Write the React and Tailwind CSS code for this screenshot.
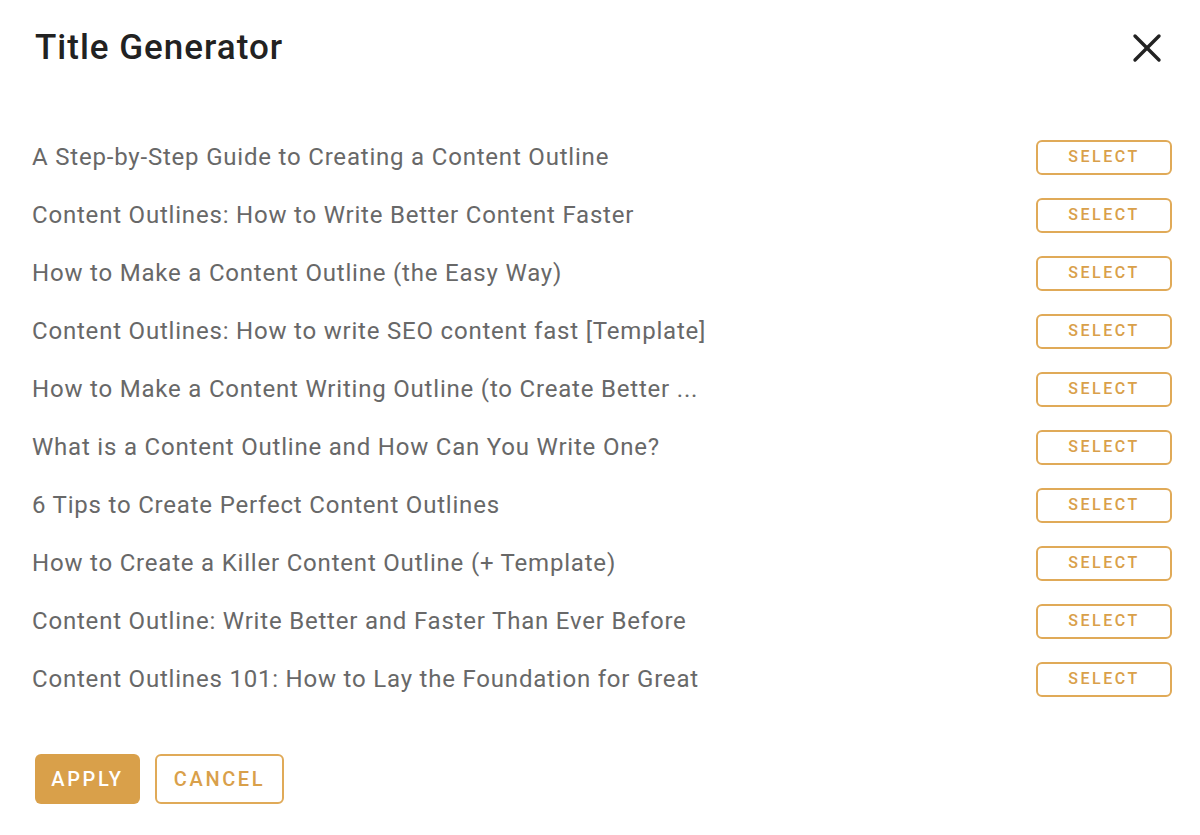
import { X } from 'lucide-react';

const titles = [
    'A Step-by-Step Guide to Creating a Content Outline',
    'Content Outlines: How to Write Better Content Faster',
    'How to Make a Content Outline (the Easy Way)',
    'Content Outlines: How to write SEO content fast [Template]',
    'How to Make a Content Writing Outline (to Create Better ...',
    'What is a Content Outline and How Can You Write One?',
    '6 Tips to Create Perfect Content Outlines',
    'How to Create a Killer Content Outline (+ Template)',
    'Content Outline: Write Better and Faster Than Ever Before',
    'Content Outlines 101: How to Lay the Foundation for Great',
];

export default function App() {
    return (
        <div className="w-[1200px] h-[835px] bg-white font-['Roboto',sans-serif] overflow-hidden">
            <div className="flex items-center justify-between pl-[35px] pr-[29px] pt-[24px]">
                <h1 className="text-[35px] font-medium text-[#222222] leading-[48px] tracking-[1px]">Title Generator</h1>
                <X className="w-[48px] h-[48px] text-[#222222]" strokeWidth={1.7} />
            </div>

            <div className="flex flex-col pl-[32px] pr-[28px] mt-[56px]">
                {titles.map((t) => (
                    <div key={t} className="flex items-center justify-between h-[58px]">
                        <span className="text-[24px] text-[#686868] tracking-[0.8px]">{t}</span>
                        <button className="w-[136px] h-[35px] border-2 border-[#e0aa58] rounded-[6px] text-[#d9a04a] text-[16px] font-medium tracking-[2.5px]">
                            SELECT
                        </button>
                    </div>
                ))}
            </div>

            <div className="flex gap-[15px] pl-[35px] mt-[46px]">
                <button className="w-[105px] h-[50px] bg-[#d9a04a] rounded-[6px] text-white text-[20px] font-medium tracking-[2.6px]">
                    APPLY
                </button>
                <button className="w-[129px] h-[50px] border-2 border-[#e0aa58] rounded-[6px] text-[#d9a04a] text-[20px] font-medium tracking-[2.6px]">
                    CANCEL
                </button>
            </div>
        </div>
    );
}
